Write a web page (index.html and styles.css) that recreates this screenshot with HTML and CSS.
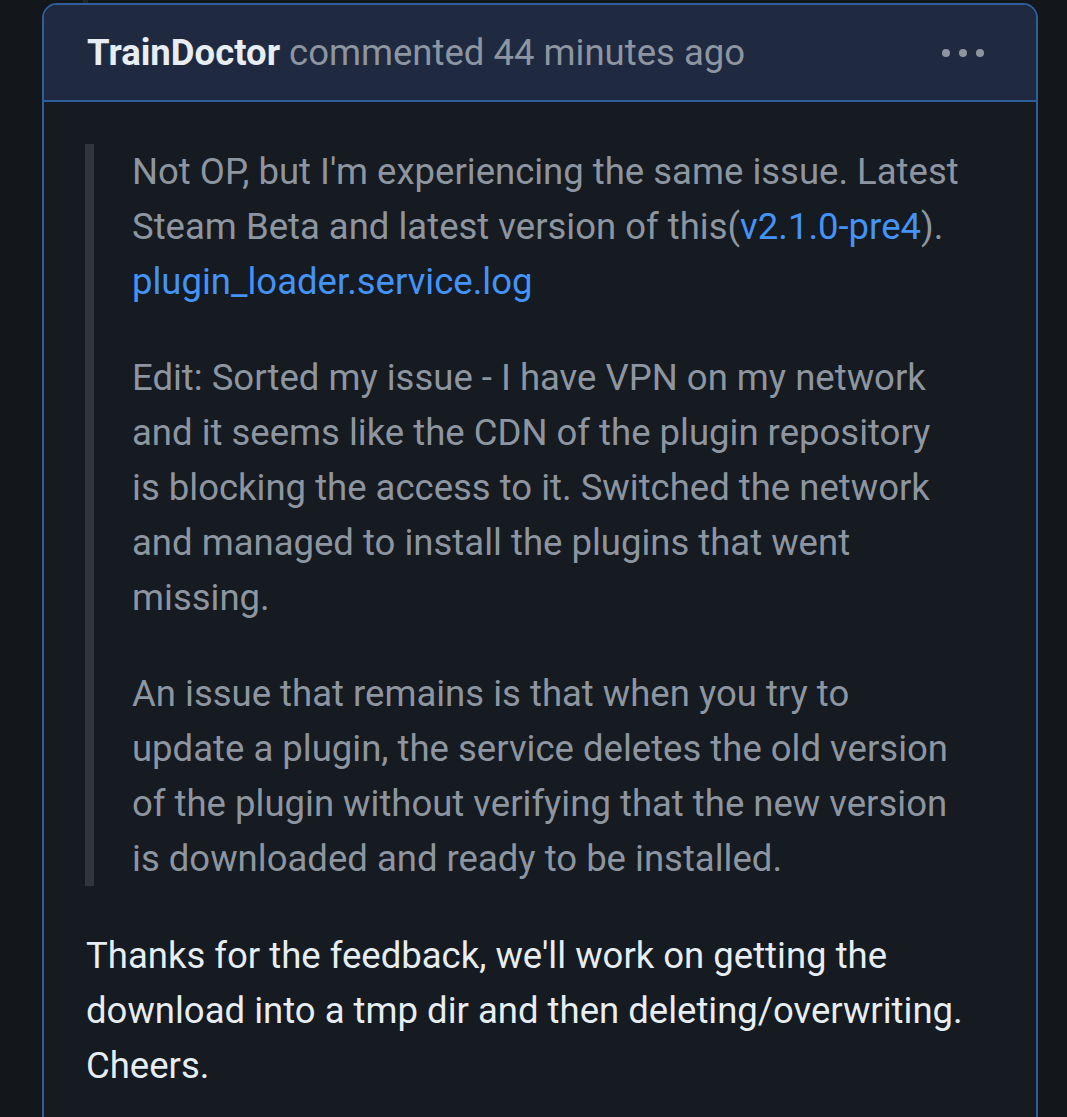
FILE: index.html
```html
<!DOCTYPE html>
<html>
<head>
<meta charset="utf-8">
<link rel="stylesheet" href="styles.css">
</head>
<body>
<div class="timeline"></div>
<div class="comment">
  <div class="header">
    <div class="meta"><span class="author">TrainDoctor</span> commented 44 minutes ago</div>
    <div class="dots"><span></span><span></span><span></span></div>
  </div>
  <div class="body">
    <blockquote>
      <p>Not OP, but I'm experiencing the same issue. Latest Steam Beta and latest version of this(<a>v2.1.0-pre4</a>).<br><a>plugin_loader.service.log</a></p>
      <p>Edit: Sorted my issue - I have VPN on my network and it seems like the CDN of the plugin repository is blocking the access to it. Switched the network and managed to install the plugins that went missing.</p>
      <p>An issue that remains is that when you try to update a plugin, the service deletes the old version of the plugin without verifying that the new version is downloaded and ready to be installed.</p>
    </blockquote>
    <p class="reply">Thanks for the feedback, we'll work on getting the download into a tmp dir and then deleting/overwriting. Cheers.</p>
  </div>
</div>
</body>
</html>
```
FILE: styles.css
```css
html, body {
  margin: 0;
  padding: 0;
  background: #13161b;
  height: 1117px;
  overflow: hidden;
}
body {
  font-family: Roboto, "Noto Sans", sans-serif;
  font-size: 36.5px;
  line-height: 55px;
  color: #e6edf3;
}
.timeline {
  width: 5px;
  height: 4px;
  margin-left: 83px;
  background: #22262d;
}
.comment {
  margin-left: 42px;
  width: 996px;
  border: 2px solid #2f5e9c;
  border-bottom: none;
  border-radius: 15px 15px 0 0;
  background: #161a21;
  height: 1200px;
  box-sizing: border-box;
  margin-top: -1px;
}
.header {
  display: flex;
  align-items: center;
  justify-content: space-between;
  height: 95px;
  padding: 0 52px 0 43px;
  background: #1f2a41;
  border-bottom: 2px solid #2f5e9c;
  border-radius: 13px 13px 0 0;
}
.meta {
  color: #8d96a0;
  margin-top: -1px;
}
.author {
  color: #e6edf3;
  font-weight: 700;
}
.dots {
  display: flex;
  gap: 9px;
}
.dots span {
  width: 8px;
  height: 8px;
  border-radius: 50%;
  background: #8d96a0;
}
.body {
  padding: 42px 30px 0 41px;
}
blockquote {
  margin: 0 44px 0 0;
  padding: 0 0 0 38px;
  border-left: 9px solid #30363d;
  color: #8d96a0;
}
blockquote p {
  margin: 0 0 41px;
}
blockquote p:last-child {
  margin-bottom: 0;
}
a {
  color: #4493f8;
}
.reply {
  margin: 42px 0 0 1px;
}
```
